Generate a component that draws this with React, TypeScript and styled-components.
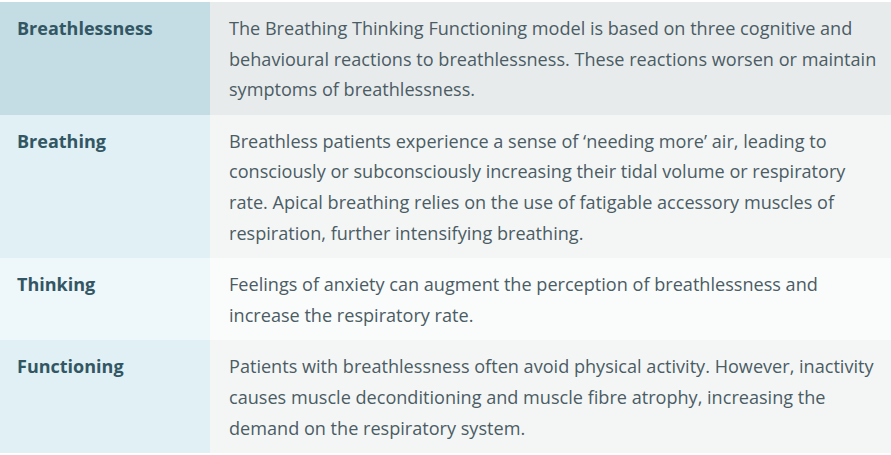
import React from "react";
import styled, { createGlobalStyle } from "styled-components";

const Global = createGlobalStyle`
  html, body { margin: 0; padding: 0; background: #ffffff; }
  body { font-family: "Open Sans", "Noto Sans", sans-serif; }
`;

type Tone = "head" | "even" | "odd";

const labelBg: Record<Tone, string> = {
  head: "#c4dde4",
  even: "#e0f0f4",
  odd: "#eef7f9",
};
const textBg: Record<Tone, string> = {
  head: "#e8ebec",
  even: "#f4f6f6",
  odd: "#fafbfb",
};

const Table = styled.div`
  display: grid;
  grid-template-columns: 210px 1fr;
  width: 891px;
  margin-top: 2px;
`;

const Label = styled.div<{ $tone: Tone }>`
  background: ${(p) => labelBg[p.$tone]};
  padding: 11px 10px 10px 17px;
  font-size: 18px;
  line-height: 30.6px;
  font-weight: 700;
  color: #325663;
`;

const Text = styled.div<{ $tone: Tone }>`
  background: ${(p) => textBg[p.$tone]};
  padding: 11px 6px 10px 19px;
  font-size: 18.1px;
  line-height: 30.6px;
  color: #4b5c64;
`;

const rows: { label: string; text: string; tone: Tone }[] = [
  {
    label: "Breathlessness",
    text: "The Breathing Thinking Functioning model is based on three cognitive and behavioural reactions to breathlessness. These reactions worsen or maintain symptoms of breathlessness.",
    tone: "head",
  },
  {
    label: "Breathing",
    text: "Breathless patients experience a sense of \u2018needing more\u2019 air, leading to consciously or subconsciously increasing their tidal volume or respiratory rate. Apical breathing relies on the use of fatigable accessory muscles of respiration, further intensifying breathing.",
    tone: "even",
  },
  {
    label: "Thinking",
    text: "Feelings of anxiety can augment the perception of breathlessness and increase the respiratory rate.",
    tone: "odd",
  },
  {
    label: "Functioning",
    text: "Patients with breathlessness often avoid physical activity. However, inactivity causes muscle deconditioning and muscle fibre atrophy, increasing the demand on the respiratory system.",
    tone: "even",
  },
];

export default function App() {
  return (
    <>
      <Global />
      <Table>
        {rows.map((r) => (
          <React.Fragment key={r.label}>
            <Label $tone={r.tone}>{r.label}</Label>
            <Text $tone={r.tone}>{r.text}</Text>
          </React.Fragment>
        ))}
      </Table>
    </>
  );
}
